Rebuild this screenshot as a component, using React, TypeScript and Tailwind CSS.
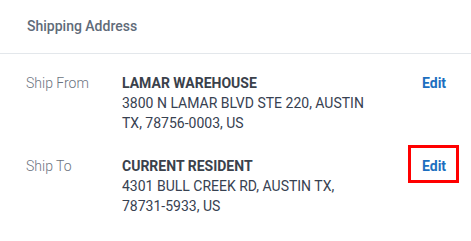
import React from "react";

function Row({ label, name, lines, highlight }: { label: string; name: string; lines: string[]; highlight?: boolean }) {
  return (
    <div className="flex">
      <div className="w-[96px] shrink-0 font-light text-[#6b7380]">{label}</div>
      <div className="flex-1 text-[#374151]">
        <div className="font-bold text-[#3a414b]">{name}</div>
        {lines.map((l) => (
          <div key={l}>{l}</div>
        ))}
      </div>
      <div className="relative w-[49px] shrink-0">
        <span className="font-bold text-[#1c6fc0]">Edit</span>
        {highlight && (
          <div className="absolute left-[-14px] top-[-11px] h-[38px] w-[51px] border-[3px] border-[#ff0000]" />
        )}
      </div>
    </div>
  );
}

export default function App() {
  return (
    <div
      className="w-[471px] h-[241px] bg-white text-[14px] leading-[20px]"
      style={{ fontFamily: "Roboto, 'Liberation Sans', sans-serif" }}
    >
      <div className="h-[54px] flex items-center px-[27px] border-b border-[#e3e7eb]">
        <span className="font-medium text-[#5f6b79] pb-[2px]">Shipping Address</span>
      </div>
      <div className="pl-[26px] pt-[19px] flex flex-col gap-[23px]">
        <Row
          label="Ship From"
          name="LAMAR WAREHOUSE"
          lines={["3800 N LAMAR BLVD STE 220, AUSTIN", "TX, 78756-0003, US"]}
        />
        <Row
          label="Ship To"
          name="CURRENT RESIDENT"
          lines={["4301 BULL CREEK RD, AUSTIN TX,", "78731-5933, US"]}
          highlight
        />
      </div>
    </div>
  );
}
